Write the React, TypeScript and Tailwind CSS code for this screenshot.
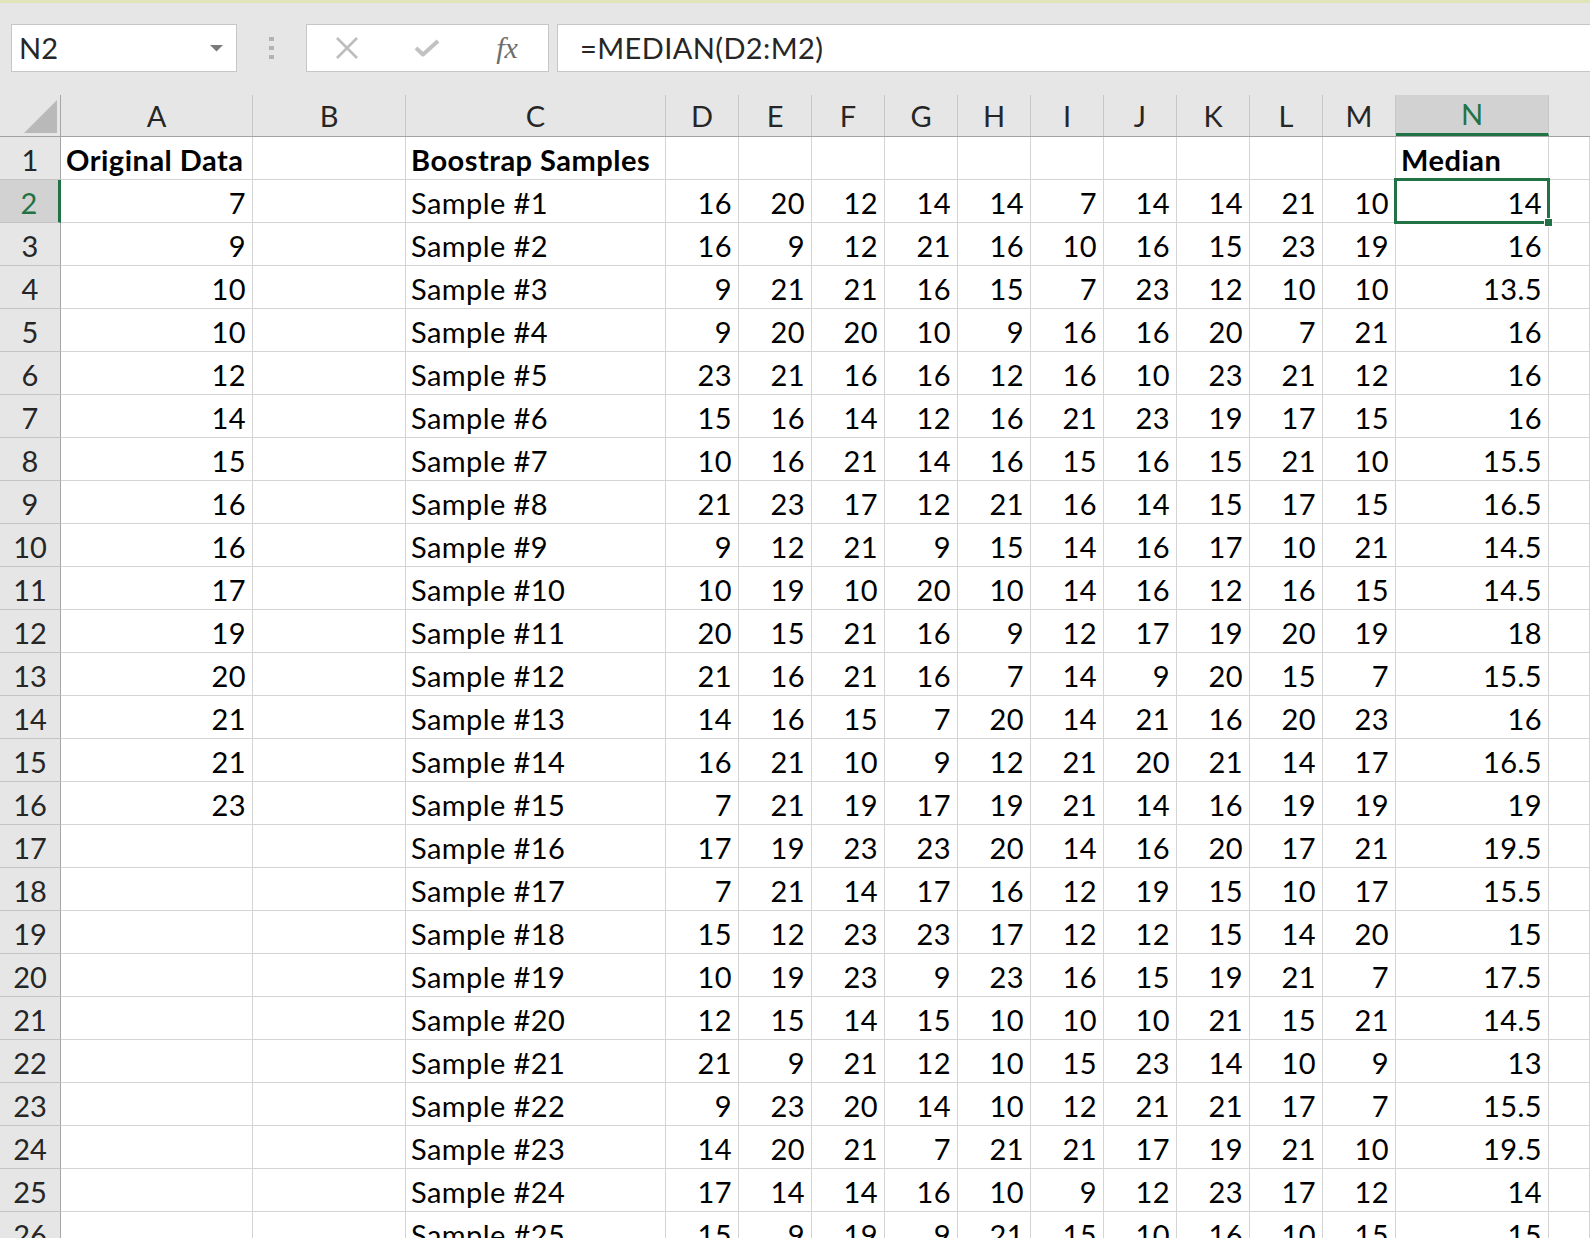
import React from 'react';

const COLS = ['A', 'B', 'C', 'D', 'E', 'F', 'G', 'H', 'I', 'J', 'K', 'L', 'M', 'N', ''];

const ORIGINAL = [7, 9, 10, 10, 12, 14, 15, 16, 16, 17, 19, 20, 21, 21, 23];

// [D..M values, median]
const SAMPLES: [number[], string][] = [
  [[16, 20, 12, 14, 14, 7, 14, 14, 21, 10], '14'],
  [[16, 9, 12, 21, 16, 10, 16, 15, 23, 19], '16'],
  [[9, 21, 21, 16, 15, 7, 23, 12, 10, 10], '13.5'],
  [[9, 20, 20, 10, 9, 16, 16, 20, 7, 21], '16'],
  [[23, 21, 16, 16, 12, 16, 10, 23, 21, 12], '16'],
  [[15, 16, 14, 12, 16, 21, 23, 19, 17, 15], '16'],
  [[10, 16, 21, 14, 16, 15, 16, 15, 21, 10], '15.5'],
  [[21, 23, 17, 12, 21, 16, 14, 15, 17, 15], '16.5'],
  [[9, 12, 21, 9, 15, 14, 16, 17, 10, 21], '14.5'],
  [[10, 19, 10, 20, 10, 14, 16, 12, 16, 15], '14.5'],
  [[20, 15, 21, 16, 9, 12, 17, 19, 20, 19], '18'],
  [[21, 16, 21, 16, 7, 14, 9, 20, 15, 7], '15.5'],
  [[14, 16, 15, 7, 20, 14, 21, 16, 20, 23], '16'],
  [[16, 21, 10, 9, 12, 21, 20, 21, 14, 17], '16.5'],
  [[7, 21, 19, 17, 19, 21, 14, 16, 19, 19], '19'],
  [[17, 19, 23, 23, 20, 14, 16, 20, 17, 21], '19.5'],
  [[7, 21, 14, 17, 16, 12, 19, 15, 10, 17], '15.5'],
  [[15, 12, 23, 23, 17, 12, 12, 15, 14, 20], '15'],
  [[10, 19, 23, 9, 23, 16, 15, 19, 21, 7], '17.5'],
  [[12, 15, 14, 15, 10, 10, 10, 21, 15, 21], '14.5'],
  [[21, 9, 21, 12, 10, 15, 23, 14, 10, 9], '13'],
  [[9, 23, 20, 14, 10, 12, 21, 21, 17, 7], '15.5'],
  [[14, 20, 21, 7, 21, 21, 17, 19, 21, 10], '19.5'],
  [[17, 14, 14, 16, 10, 9, 12, 23, 17, 12], '14'],
  [[15, 9, 19, 9, 21, 15, 10, 16, 10, 15], '15'],
];

const GRID = 'grid grid-cols-[61px_192px_153px_260px_repeat(10,73px)_153px_1fr]';

function Cell({
  children,
  left = false,
  bold = false,
  selected = false,
}: {
  children?: React.ReactNode;
  left?: boolean;
  bold?: boolean;
  selected?: boolean;
}) {
  return (
    <div
      className={`relative flex items-end h-[43px] border-r border-b border-[#d4d4d4] bg-white pb-[5px] leading-[28px] whitespace-nowrap ${
        left ? 'justify-start pl-[5px]' : 'justify-end pr-[6px]'
      } ${bold ? 'font-bold tracking-[0.5px]' : 'tracking-[0.4px]'}`}
    >
      {children}
      {selected && (
        <>
          <div className="absolute z-10 -top-[2px] -left-[2px] -right-[2px] -bottom-[2px] border-[3px] border-[#217346] pointer-events-none" />
          <div className="absolute z-20 -right-[5px] -bottom-[5px] w-[9px] h-[9px] bg-[#217346] border border-white" />
        </>
      )}
    </div>
  );
}

function RowHeader({ n, active }: { n: number; active?: boolean }) {
  return (
    <div
      className={`flex items-end justify-center h-[43px] pb-[5px] leading-[28px] border-b border-[#c4c4c4] ${
        active
          ? 'bg-[#d2d2d2] text-[#217346] border-r-[3px] border-r-[#217346]'
          : 'bg-[#e6e6e6] text-[#262626] border-r border-r-[#a6a6a6]'
      }`}
    >
      {n}
    </div>
  );
}

function FormulaBar() {
  return (
    <div className="h-[95px] bg-[#e6e6e6] flex flex-col">
      <div className="h-[3px] bg-[#e1e3b8]" />
      <div className="flex items-start pt-[21px] pl-[11px]">
        {/* name box */}
        <div className="w-[226px] h-[48px] bg-white border border-[#c6c6c6] flex items-center justify-between pl-[7px] pr-[13px]">
          <span className="leading-[28px] text-[#262626]">N2</span>
          <svg width="13" height="7" viewBox="0 0 13 7">
            <path d="M0 0 L13 0 L6.5 6.5 Z" fill="#7a7a7a" />
          </svg>
        </div>
        {/* grip dots */}
        <div className="w-[69px] h-[48px] flex flex-col items-center justify-center gap-[5px]">
          <div className="w-[5px] h-[4px] bg-[#b3b3b3]" />
          <div className="w-[5px] h-[4px] bg-[#b3b3b3]" />
          <div className="w-[5px] h-[4px] bg-[#b3b3b3]" />
        </div>
        {/* cancel / enter / fx */}
        <div className="w-[243px] h-[48px] bg-white border border-[#c6c6c6] flex items-center">
          <div className="w-[80px] flex justify-center">
            <svg width="24" height="22" viewBox="0 0 24 22">
              <path d="M2 1 L22 21 M22 1 L2 21" stroke="#bdbdbd" strokeWidth="2.6" fill="none" />
            </svg>
          </div>
          <div className="w-[80px] flex justify-center">
            <svg width="26" height="18" viewBox="0 0 26 18">
              <path d="M2 9 L9 15.5 L24 2" stroke="#c2c2c2" strokeWidth="4" fill="none" strokeLinejoin="round" />
            </svg>
          </div>
          <div className="w-[80px] flex justify-center">
            <span className="font-['Liberation_Serif',serif] italic text-[30px] leading-[30px] text-[#6e6e6e]">fx</span>
          </div>
        </div>
        {/* formula */}
        <div className="ml-[8px] flex-1 h-[48px] bg-white border border-r-0 border-[#c6c6c6] flex items-center pl-[22px]">
          <span className="leading-[28px] tracking-[0.4px] text-[#262626]">=MEDIAN(D2:M2)</span>
        </div>
      </div>
    </div>
  );
}

export default function App() {
  const rows = Array.from({ length: 25 }, (_, i) => i + 2);

  return (
    <div className="w-[1590px] h-[1238px] overflow-hidden bg-white font-['Lato',sans-serif] text-[29px] text-black">
      <FormulaBar />

      {/* column headers */}
      <div className={`${GRID} h-[42px] bg-[#e6e6e6] border-b border-[#a3a3a3]`}>
        <div className="flex items-end justify-end pr-[3px] pb-[3px] border-r border-[#a6a6a6]">
          <svg width="33" height="33" viewBox="0 0 33 33">
            <path d="M33 0 L33 33 L0 33 Z" fill="#b9b9b9" />
          </svg>
        </div>
        {COLS.map((c, i) => (
          <div
            key={i}
            className={`flex items-center justify-center leading-[28px] ${
              c === 'N'
                ? 'bg-[#d2d2d2] text-[#217346] border-b-[3px] border-[#217346] border-r border-r-[#c6c6c6]'
                : 'text-[#262626] border-r border-[#c6c6c6]'
            } ${c === '' ? 'border-r-0' : ''}`}
          >
            {c}
          </div>
        ))}
      </div>

      {/* row 1 */}
      <div className={GRID}>
        <RowHeader n={1} />
        <Cell left bold>Original Data</Cell>
        <Cell />
        <Cell left bold>Boostrap Samples</Cell>
        {Array.from({ length: 10 }, (_, k) => (
          <Cell key={k} />
        ))}
        <Cell left bold>Median</Cell>
        <Cell />
      </div>

      {rows.map((r, i) => {
        const [vals, med] = SAMPLES[i] ?? [[], ''];
        return (
          <div key={r} className={GRID}>
            <RowHeader n={r} active={r === 2} />
            <Cell>{ORIGINAL[i] ?? ''}</Cell>
            <Cell />
            <Cell left>Sample #{i + 1}</Cell>
            {vals.map((v, k) => (
              <Cell key={k}>{v}</Cell>
            ))}
            <Cell selected={r === 2}>{med}</Cell>
            <Cell />
          </div>
        );
      })}
    </div>
  );
}
